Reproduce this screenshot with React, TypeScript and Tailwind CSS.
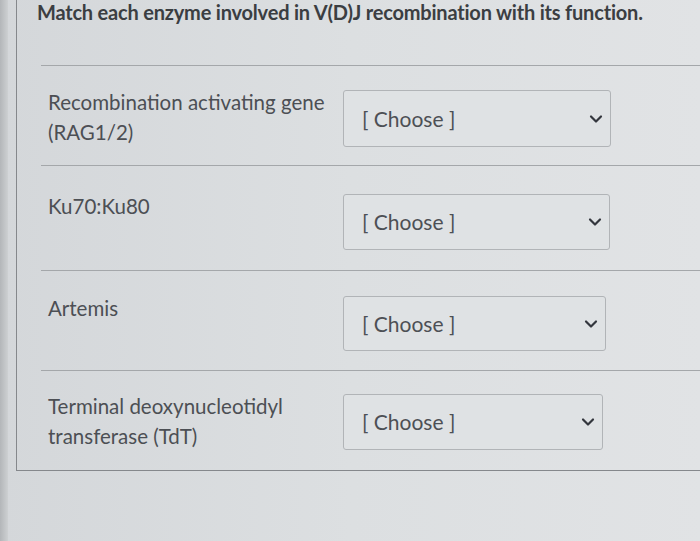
import React from "react";

const rows = [
  { label: ["Recombination activating gene", "(RAG1/2)"], h: "h-[100px]", pt: "pt-[24px]", w: "w-[268px]", bh: "h-[57px]" },
  { label: ["Ku70:Ku80"], h: "h-[105px]", pt: "pt-[28px]", w: "w-[267px]", bh: "h-[56px]" },
  { label: ["Artemis"], h: "h-[100px]", pt: "pt-[25px]", w: "w-[263px]", bh: "h-[55px]" },
  { label: ["Terminal deoxynucleotidyl", "transferase (TdT)"], h: "h-[95px]", pt: "pt-[23px]", w: "w-[260px]", bh: "h-[56px]" },
];

function Chevron() {
  return (
    <svg width="14" height="10" viewBox="0 0 14 10" className="shrink-0">
      <path d="M2 2.5 L7 7.5 L12 2.5" fill="none" stroke="#33363d" strokeWidth="2.2" strokeLinecap="round" strokeLinejoin="round" />
    </svg>
  );
}

export default function App() {
  return (
    <div
      className="w-[700px] h-[541px] overflow-hidden flex bg-gradient-to-r from-[#d4d7da] via-[#dcdfe1] to-[#e1e3e5] text-[#4a4d52]"
      style={{ fontFamily: "Lato, 'Noto Sans', sans-serif" }}
    >
      <div className="w-[8px] shrink-0 bg-gradient-to-r from-[#b3b6b9] to-[#cdd0d2]" />
      <div className="w-[8px] shrink-0" />
      <div className="flex-1 h-[471px] border-l border-b border-[#85888c] flex flex-col">
        <div className="h-[49px] pl-[20px] text-[20px] leading-[26px] font-bold text-[#3b3e42] tracking-[-0.2px] -mt-[1px]">
          Match each enzyme involved in V(D)J recombination with its function.
        </div>
        <div className="ml-[24px] border-t border-[#a4a7aa] mt-[17px]" />
        {rows.map((r, i) => (
          <div
            key={i}
            className={`${r.h} ${r.pt} ${i < rows.length - 1 ? "ml-[24px] border-b border-[#a4a7aa]" : "ml-[24px]"} flex items-start`}
          >
            <div className="w-[302px] pl-[7px] -mt-[3px] text-[20.5px] leading-[30px] text-[#4c4f54]">
              {r.label.map((l, j) => (
                <div key={j}>{l}</div>
              ))}
            </div>
            <div
              className={`${r.w} ${r.bh} border border-[#b1b4b7] rounded-[3px] bg-[#dfe2e4] flex items-center justify-between pl-[18px] pr-[7px]`}
            >
              <span className="text-[21px] text-[#4d5055]">[ Choose ]</span>
              <Chevron />
            </div>
          </div>
        ))}
      </div>
    </div>
  );
}
